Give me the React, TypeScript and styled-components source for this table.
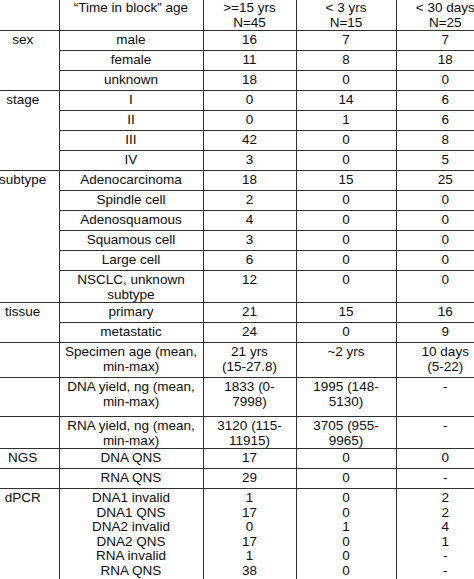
import React from "react";
import styled, { createGlobalStyle } from "styled-components";

const Global = createGlobalStyle`
  html, body { margin: 0; padding: 0; background: #fff; }
  body { width: 474px; height: 579px; overflow: hidden; }
  #root { width: 474px; overflow: hidden; }
`;

const Table = styled.table`
  margin-left: -13px;
  border-collapse: collapse;
  table-layout: fixed;
  width: 507px;
  font-family: "Liberation Sans", Arial, sans-serif;
  font-size: 13.5px;
  line-height: 14.5px;
  color: #0d0d0d;
`;

const Row = styled.tr<{ $h: number }>`
  height: ${(p) => p.$h}px;
`;

const Cell = styled.td<{ $first?: boolean; $top?: boolean }>`
  padding: ${(p) => (p.$top ? "1px" : "2px")} 1px 0 1px;
  vertical-align: top;
  text-align: center;
  white-space: nowrap;
  border-top: ${(p) => (p.$top ? "none" : "1px solid #303030")};
  border-left: ${(p) => (p.$first ? "none" : "1px solid #303030")};
`;

const Col = styled.col<{ $w: number }>`
  width: ${(p) => p.$w}px;
`;

const Lines = styled.div`
  line-height: 14.6px;
`;

type R = {
  label?: string;
  span?: number;
  item: React.ReactNode;
  v: React.ReactNode[];
  h: number;
};

const br = (a: string, b: string) => (
  <>
    {a}
    <br />
    {b}
  </>
);

const rows: R[] = [
  { label: "sex", span: 3, item: "male", v: ["16", "7", "7"], h: 20 },
  { item: "female", v: ["11", "8", "18"], h: 20 },
  { item: "unknown", v: ["18", "0", "0"], h: 20 },
  { label: "stage", span: 4, item: "I", v: ["0", "14", "6"], h: 20 },
  { item: "II", v: ["0", "1", "6"], h: 20 },
  { item: "III", v: ["42", "0", "8"], h: 20 },
  { item: "IV", v: ["3", "0", "5"], h: 20 },
  { label: "subtype", span: 6, item: "Adenocarcinoma", v: ["18", "15", "25"], h: 20 },
  { item: "Spindle cell", v: ["2", "0", "0"], h: 20 },
  { item: "Adenosquamous", v: ["4", "0", "0"], h: 20 },
  { item: "Squamous cell", v: ["3", "0", "0"], h: 20 },
  { item: "Large cell", v: ["6", "0", "0"], h: 20 },
  { item: br("NSCLC, unknown", "subtype"), v: ["12", "0", "0"], h: 32 },
  { label: "tissue", span: 2, item: "primary", v: ["21", "15", "16"], h: 20 },
  { item: "metastatic", v: ["24", "0", "9"], h: 20 },
  {
    label: "",
    span: 1,
    item: br("Specimen age (mean,", "min-max)"),
    v: [br("21 yrs", "(15-27.8)"), "~2 yrs", br("10 days", "(5-22)")],
    h: 35,
  },
  {
    label: "",
    span: 1,
    item: br("DNA yield, ng (mean,", "min-max)"),
    v: [br("1833 (0-", "7998)"), br("1995 (148-", "5130)"), "-"],
    h: 39,
  },
  {
    label: "",
    span: 1,
    item: br("RNA yield, ng (mean,", "min-max)"),
    v: [br("3120 (115-", "11915)"), br("3705 (955-", "9965)"), "-"],
    h: 30,
  },
  { label: "NGS", span: 1, item: "DNA QNS", v: ["17", "0", "0"], h: 20 },
  { label: "", span: 1, item: "RNA QNS", v: ["29", "0", "-"], h: 20 },
];

const dpcr = [
  ["DNA1 invalid", "1", "0", "2"],
  ["DNA1 QNS", "17", "0", "2"],
  ["DNA2 invalid", "0", "1", "4"],
  ["DNA2 QNS", "17", "0", "1"],
  ["RNA invalid", "1", "0", "-"],
  ["RNA QNS", "38", "0", "-"],
];

const lines = (idx: number) => (
  <Lines>
    {dpcr.map((d, i) => (
      <React.Fragment key={i}>
        {d[idx]}
        {i < dpcr.length - 1 && <br />}
      </React.Fragment>
    ))}
  </Lines>
);

export default function App() {
  return (
    <>
      <Global />
      <Table>
        <colgroup>
          <Col $w={72} />
          <Col $w={144} />
          <Col $w={93} />
          <Col $w={100} />
          <Col $w={98} />
        </colgroup>
        <tbody>
          <Row $h={29}>
            <Cell $first $top />
            <Cell $top>“Time in block” age</Cell>
            <Cell $top>{br(">=15 yrs", "N=45")}</Cell>
            <Cell $top>{br("< 3 yrs", "N=15")}</Cell>
            <Cell $top>{br("< 30 days", "N=25")}</Cell>
          </Row>
          {rows.map((r, i) => (
            <Row key={i} $h={r.h}>
              {r.label !== undefined && (
                <Cell $first rowSpan={r.span}>
                  {r.label}
                </Cell>
              )}
              <Cell>{r.item}</Cell>
              {r.v.map((v, j) => (
                <Cell key={j}>{v}</Cell>
              ))}
            </Row>
          ))}
          <Row $h={94}>
            <Cell $first>dPCR</Cell>
            <Cell>{lines(0)}</Cell>
            <Cell>{lines(1)}</Cell>
            <Cell>{lines(2)}</Cell>
            <Cell>{lines(3)}</Cell>
          </Row>
        </tbody>
      </Table>
    </>
  );
}
